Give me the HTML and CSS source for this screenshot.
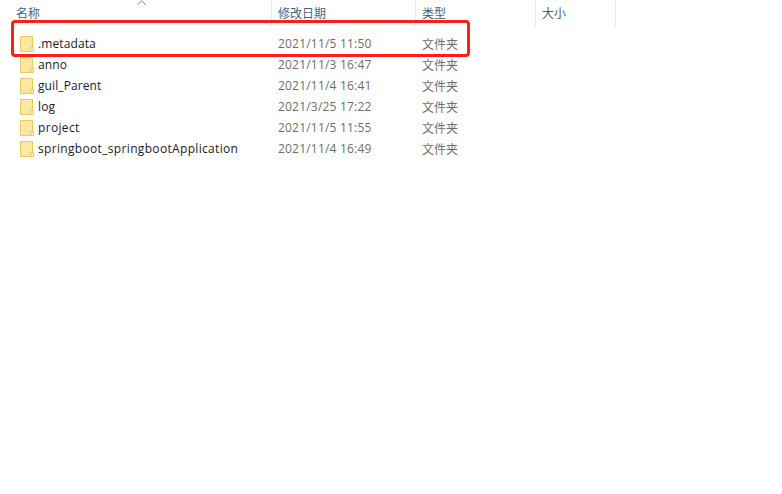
FILE: index.html
```html
<!DOCTYPE html>
<html>
<head>
    <title>Folder</title>
    <link rel="stylesheet" href="styles.css">
</head>
<body>
    <svg class="defs" width="0" height="0">
        <symbol id="folder" viewBox="0 0 14 16">
            <path d="M0.5 0.5H12.5V15.5H0.5Z" fill="#fde7a2" stroke="#ecc95c"/>
            <path d="M10.5 15.5V11.5H13.5V15.5Z" fill="#fff2c4" stroke="#ecc95c"/>
        </symbol>
    </svg>

    <div class="header">
        <div class="col name">名称<svg class="sort" viewBox="0 0 9 5"><path d="M0.5 4.5L4.5 0.8L8.5 4.5" fill="none" stroke="#80868e"/></svg></div>
        <div class="col date">修改日期</div>
        <div class="col type">类型</div>
        <div class="col size">大小</div>
    </div>

    <div class="rows">
        <div class="row">
            <div class="cell name"><svg class="icon"><use href="#folder"/></svg>.metadata</div>
            <div class="cell date">2021/11/5 11:50</div>
            <div class="cell type">文件夹</div>
        </div>
        <div class="row">
            <div class="cell name"><svg class="icon"><use href="#folder"/></svg>anno</div>
            <div class="cell date">2021/11/3 16:47</div>
            <div class="cell type">文件夹</div>
        </div>
        <div class="row">
            <div class="cell name"><svg class="icon"><use href="#folder"/></svg>guil_Parent</div>
            <div class="cell date">2021/11/4 16:41</div>
            <div class="cell type">文件夹</div>
        </div>
        <div class="row">
            <div class="cell name"><svg class="icon"><use href="#folder"/></svg>log</div>
            <div class="cell date">2021/3/25 17:22</div>
            <div class="cell type">文件夹</div>
        </div>
        <div class="row">
            <div class="cell name wide"><svg class="icon"><use href="#folder"/></svg>project</div>
            <div class="cell date">2021/11/5 11:55</div>
            <div class="cell type">文件夹</div>
        </div>
        <div class="row">
            <div class="cell name wide"><svg class="icon"><use href="#folder"/></svg>springboot_springbootApplication</div>
            <div class="cell date">2021/11/4 16:49</div>
            <div class="cell type">文件夹</div>
        </div>
    </div>

    <div class="highlight"></div>
</body>
</html>
```

FILE: styles.css
```css
body {
    margin: 0;
    height: 494px;
    position: relative;
    overflow: hidden;
    background-color: #fff;
    font-family: "Open Sans", "Noto Sans CJK SC", sans-serif;
    font-size: 12px;
}

.defs {
    position: absolute;
}

.header {
    display: flex;
    height: 26px;
    color: #4c607a;
}

.col {
    box-sizing: border-box;
    border-right: 1px solid #e5e5e5;
    padding-top: 5px;
    line-height: 17px;
    padding-left: 6px;
    position: relative;
}

.col.name {
    width: 272px;
    padding-left: 16px;
}

.col.date {
    width: 144px;
}

.col.type {
    width: 120px;
}

.col.size {
    width: 80px;
}

.sort {
    position: absolute;
    left: 137px;
    top: 0;
    width: 9px;
    height: 5px;
}

.rows {
    padding-top: 7px;
}

.row {
    display: flex;
    height: 21px;
    align-items: center;
}

.cell {
    box-sizing: border-box;
    white-space: nowrap;
}

.cell.name {
    width: 272px;
    padding-left: 20px;
    display: flex;
    align-items: center;
    color: #1a1a2e;
    letter-spacing: 0.1px;
}

.cell.name.wide {
    letter-spacing: 0.33px;
}

.icon {
    width: 14px;
    height: 16px;
    margin-right: 4px;
}

.cell.date {
    width: 144px;
    padding-left: 6px;
    color: #6d6d6d;
    letter-spacing: 0.2px;
}

.cell.type {
    width: 120px;
    padding-left: 6px;
    color: #6d6d6d;
}

.highlight {
    position: absolute;
    left: 11px;
    top: 20px;
    width: 453px;
    height: 31px;
    border: 3px solid #fb2012;
    border-radius: 4px;
}
```
